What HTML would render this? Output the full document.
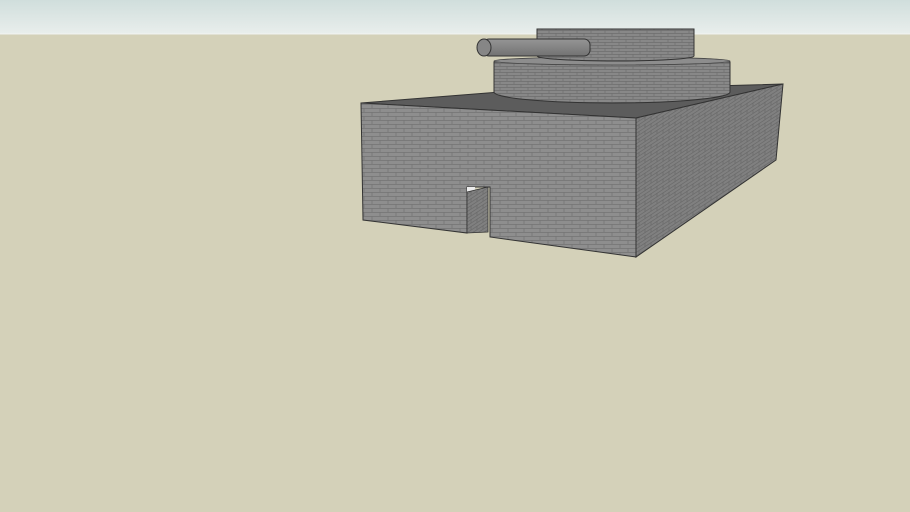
<!DOCTYPE html>
<html><head><style>
html,body{margin:0;padding:0;width:910px;height:512px;overflow:hidden;background:#d4d1b9}
svg{display:block}
</style></head><body>
<svg width="910" height="512" viewBox="0 0 910 512" xmlns="http://www.w3.org/2000/svg">
<defs>
<linearGradient id="sky" x1="0" y1="0" x2="0" y2="1">
<stop offset="0" stop-color="#d0dedc"/><stop offset="1" stop-color="#e9eeec"/>
</linearGradient>
<pattern id="brick" width="16" height="8" patternUnits="userSpaceOnUse">
<rect width="16" height="8" fill="#8e8e8e"/>
<path d="M0 0.5H16M0 4.5H16M4 0V4M12 4V8" stroke="#737373" stroke-width="0.7"/>
</pattern>
<pattern id="brickD" width="12" height="7" patternUnits="userSpaceOnUse" patternTransform="skewY(-33)">
<rect width="12" height="7" fill="#808080"/>
<path d="M0 0.5H12M0 4H12M3 0V3.5M9 3.5V7" stroke="#676767" stroke-width="0.7"/>
</pattern>
<pattern id="brickC" width="14" height="6" patternUnits="userSpaceOnUse">
<rect width="14" height="6" fill="#888"/>
<path d="M0 0.5H14M0 3.5H14M3 0V3M10 3V6" stroke="#6e6e6e" stroke-width="0.7"/>
</pattern>
<linearGradient id="barrel" x1="0" y1="0" x2="0" y2="1">
<stop offset="0" stop-color="#959595"/><stop offset="1" stop-color="#727272"/>
</linearGradient>
</defs>
<rect width="910" height="34" fill="url(#sky)"/>
<rect y="33" width="910" height="1.5" fill="#eef1ef"/>
<polygon points="361,103 500,92 783,84 636,118" fill="#5c5c5c" stroke="#333" stroke-width="1"/>
<!-- lower tier cylinder -->
<path d="M494,62 L494,92 A118,11 0 0 0 730,92 L730,62 Z" fill="url(#brickC)" stroke="#333" stroke-width="1"/>
<ellipse cx="612" cy="61" rx="118" ry="4" fill="#8d8d8d" stroke="#444" stroke-width="0.8"/>
<!-- upper cylinder -->
<path d="M537,29 L537,56 A78.5,5 0 0 0 694,56 L694,29 Z" fill="url(#brickC)" stroke="#333" stroke-width="1"/>
<!-- barrel -->
<rect x="483" y="39" width="107" height="17" rx="6" fill="url(#barrel)" stroke="#333" stroke-width="1"/>
<ellipse cx="484" cy="47.5" rx="7" ry="8.5" fill="#868686" stroke="#333" stroke-width="1"/>
<polygon points="636,118 783,84 776,160 636,257" fill="url(#brickD)" stroke="#333" stroke-width="1"/>
<polygon points="361,103 636,118 636,257 490,237 490,187 467,187 467,233 363,220" fill="url(#brick)" stroke="#333" stroke-width="1"/>
<polygon points="467,187 475,187 475,190 467,192" fill="#ececec"/>
<polygon points="467,192 488,187 488,232 467,233" fill="url(#brickD)" stroke="#333" stroke-width="0.8"/>
</svg>
</body></html>
